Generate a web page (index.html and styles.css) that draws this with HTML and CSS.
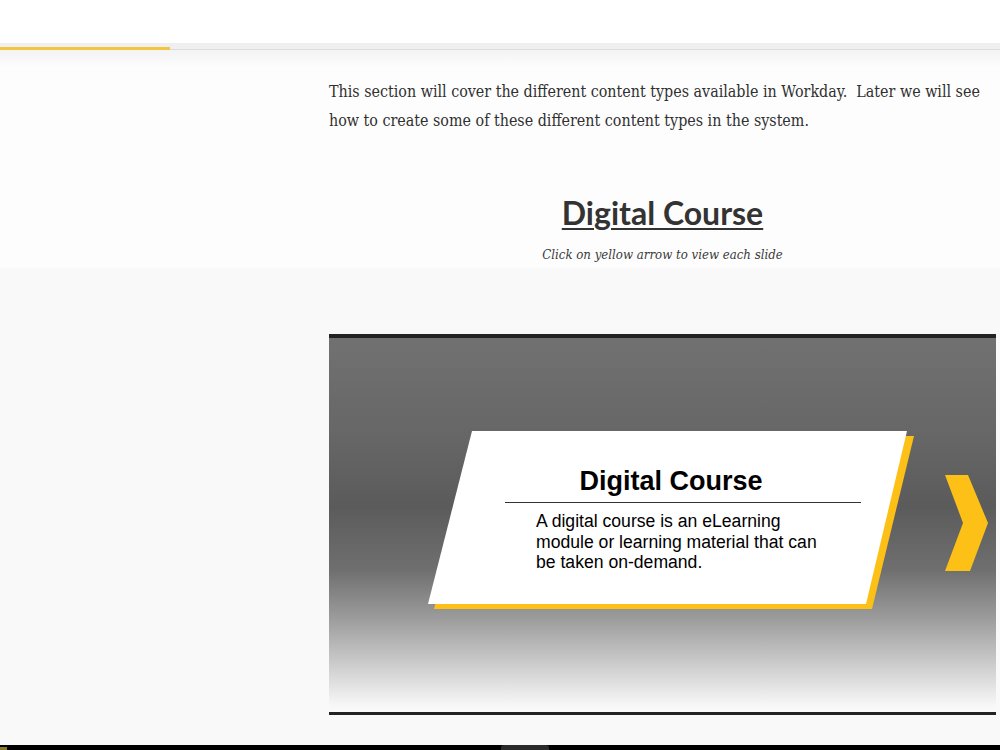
FILE: index.html
```html
<!DOCTYPE html>
<html>
<head>
<meta charset="utf-8">
<link rel="stylesheet" href="styles.css">
</head>
<body>
<div class="page">
  <header class="topbar"></header>
  <div class="progress"><div class="progress-fill"></div></div>
  <div class="progress-shadow"></div>
  <section class="intro">
    <div class="content">
      <p class="lead">This section will cover the different content types available in Workday.&nbsp; Later we will see how to create some of these different content types in the system.</p>
      <h2 class="heading">Digital Course</h2>
      <p class="caption">Click on yellow arrow to view each slide</p>
    </div>
  </section>
  <section class="slides">
    <div class="content">
      <div class="slide">
        <div class="card">
          <svg class="card-bg" width="486" height="179" viewBox="0 0 486 179">
            <polygon points="50,5 486,5 444,178 6,178" fill="#fcc016"/>
            <polygon points="44,0 479,0 438,173 0,173" fill="#ffffff"/>
          </svg>
          <div class="card-title">Digital Course</div>
          <div class="card-rule"></div>
          <div class="card-text">A digital course is an eLearning module or learning material that can be taken on-demand.</div>
        </div>
        <svg class="next" width="46" height="99" viewBox="0 0 46 99">
          <polygon points="1,1 24,1 44,49 26,97 1,97 19,49" fill="#fcc016"/>
        </svg>
      </div>
    </div>
  </section>
  <footer class="bottombar"><span class="bb-mark"></span><span class="bb-tab"></span></footer>
</div>
</body>
</html>
```

FILE: styles.css
```css
html, body {
  margin: 0;
  padding: 0;
}
body {
  width: 1000px;
  height: 750px;
  overflow: hidden;
  background: #f9f9f9;
}
.page {
  display: flex;
  flex-direction: column;
  height: 750px;
}
.topbar {
  height: 43px;
  background: #ffffff;
}
.progress {
  height: 6px;
  background: #efefef;
  border-bottom: 1px solid #dcdcdc;
  display: flex;
  align-items: flex-end;
}
.progress-fill {
  width: 170px;
  height: 3px;
  background: #f2c641;
  margin-bottom: -1px;
}
.progress-shadow {
  height: 17px;
  background: linear-gradient(#f3f3f3, #fdfdfd);
}
.intro {
  background: #fdfdfd;
  height: 201px;
}
.content {
  margin-left: 329px;
  width: 667px;
}
.lead {
  margin: 10px 0 0 0;
  font-family: "DejaVu Serif", serif;
  font-stretch: condensed;
  font-size: 15.9px;
  line-height: 29px;
  color: #303030;
}
.heading {
  margin: 60px 0 0 0;
  text-align: center;
  font-family: Lato, "Liberation Sans", sans-serif;
  font-weight: 700;
  font-size: 32px;
  line-height: 36px;
  color: #333333;
  text-decoration: underline;
  text-decoration-thickness: 2px;
  text-underline-offset: 3px;
}
.caption {
  margin: 14px 0 0 0;
  text-align: center;
  font-family: "DejaVu Serif", serif;
  font-stretch: condensed;
  font-style: italic;
  font-size: 13.1px;
  line-height: 20px;
  color: #3a3a3a;
}
.slides {
  flex: 1;
  background: #f9f9f9;
  padding-top: 66px;
}
.slide {
  height: 374px;
  border-top: 4px solid #232323;
  border-bottom: 3px solid #232323;
  background: linear-gradient(#707170 0%, #666766 25%, #5a5b5a 45%, #6e6f6e 62%, #9c9c9c 75%, #cfcfcf 88%, #f6f6f6 98%, #fafafa 100%);
  display: flex;
  align-items: flex-start;
}
.card {
  position: relative;
  width: 486px;
  height: 179px;
  margin-left: 99px;
  margin-top: 93px;
}
.card-bg {
  position: absolute;
  left: 0;
  top: 0;
}
.card-title {
  position: relative;
  margin: 35px 0 0 0;
  text-align: center;
  font-family: "Liberation Sans", Arial, sans-serif;
  font-weight: 700;
  font-size: 27px;
  line-height: 30px;
  color: #000000;
}
.card-rule {
  position: relative;
  margin: 6px 0 0 77px;
  width: 356px;
  height: 1px;
  background: #333333;
}
.card-text {
  position: relative;
  margin: 8px 0 0 108px;
  width: 300px;
  font-family: "Liberation Sans", Arial, sans-serif;
  font-size: 17.6px;
  line-height: 20.5px;
  color: #000000;
}
.next {
  margin-left: 30px;
  margin-top: 136px;
}
.bottombar {
  height: 5px;
  background: #000000;
  display: flex;
  align-items: flex-end;
}
.bb-mark {
  width: 7px;
  height: 3px;
  background: #8a7a20;
}
.bb-tab {
  margin-left: 494px;
  width: 48px;
  height: 5px;
  background: #2a2a2a;
  border-radius: 3px 3px 0 0;
}
```
